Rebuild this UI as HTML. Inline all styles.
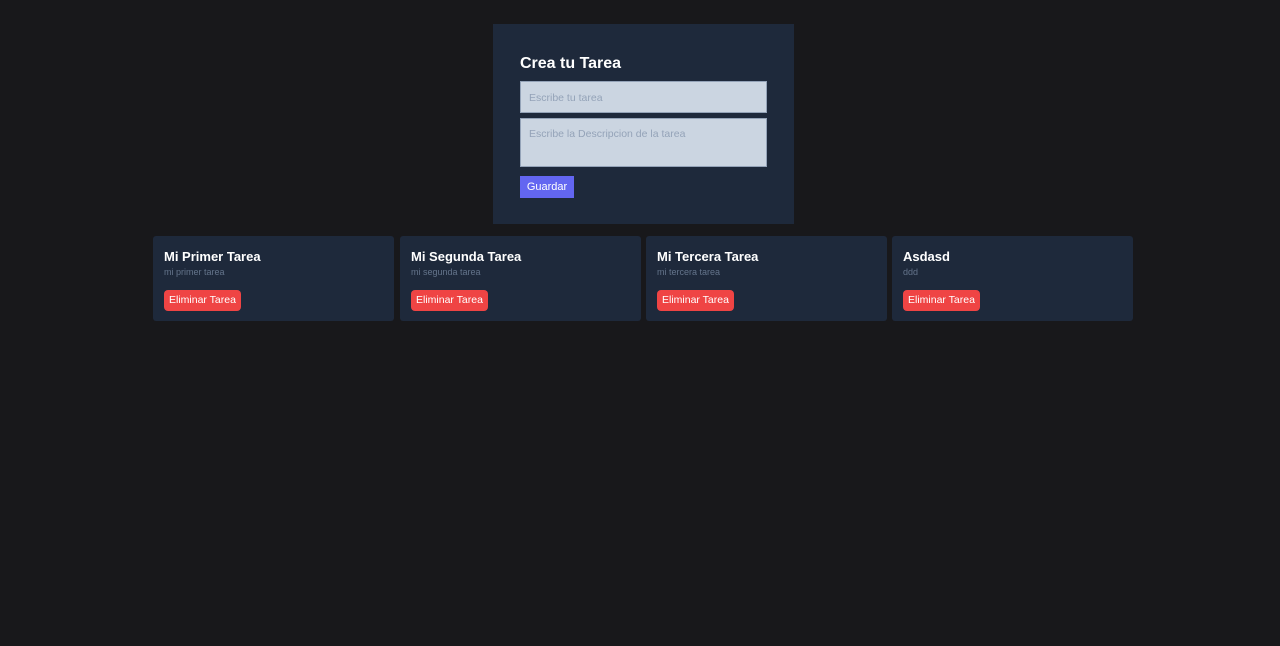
<!DOCTYPE html>
<html><head><style>
body{margin:0;background:#18181b;font-family:"Liberation Sans",sans-serif;width:1280px;height:646px;overflow:hidden;position:relative}
.form{position:absolute;left:493px;top:24px;width:301px;height:200px;background:#1e293b}
.form h1{position:absolute;left:27px;top:31px;margin:0;font-size:16px;color:#fff;font-weight:bold;line-height:18px}
.in{position:absolute;left:27px;width:247px;background:#cbd5e1;box-sizing:border-box;border:1px solid #94a3b8;color:#94a3b8;font-size:10.5px;padding-left:8px}
.btn{position:absolute;left:27px;top:152px;width:54px;height:22px;background:#6366f1;color:#fff;font-size:11px;line-height:22px;text-align:center}
.card{position:absolute;top:236px;width:241px;height:85px;background:#1e293b;border-radius:3px}
.card h2{position:absolute;left:11px;top:13px;margin:0;font-size:13px;color:#fff;font-weight:bold}
.card p{position:absolute;left:11px;top:31px;margin:0;font-size:9px;color:#64748b}
.card span{position:absolute;left:11px;top:54px;height:21px;padding:0 5px;background:#ef4444;color:#fff;font-size:10.5px;line-height:21px;border-radius:4px}
</style></head><body>
<div class="form">
<h1>Crea tu Tarea</h1>
<div class="in" style="top:57px;height:32px;line-height:32px">Escribe tu tarea</div>
<div class="in" style="top:94px;height:49px;padding-top:9px">Escribe la Descripcion de la tarea</div>
<div class="btn">Guardar</div>
</div>
<div class="card" style="left:153px"><h2>Mi Primer Tarea</h2><p>mi primer tarea</p><span>Eliminar Tarea</span></div>
<div class="card" style="left:400px"><h2>Mi Segunda Tarea</h2><p>mi segunda tarea</p><span>Eliminar Tarea</span></div>
<div class="card" style="left:646px"><h2>Mi Tercera Tarea</h2><p>mi tercera tarea</p><span>Eliminar Tarea</span></div>
<div class="card" style="left:892px"><h2>Asdasd</h2><p>ddd</p><span>Eliminar Tarea</span></div>
</body></html>
